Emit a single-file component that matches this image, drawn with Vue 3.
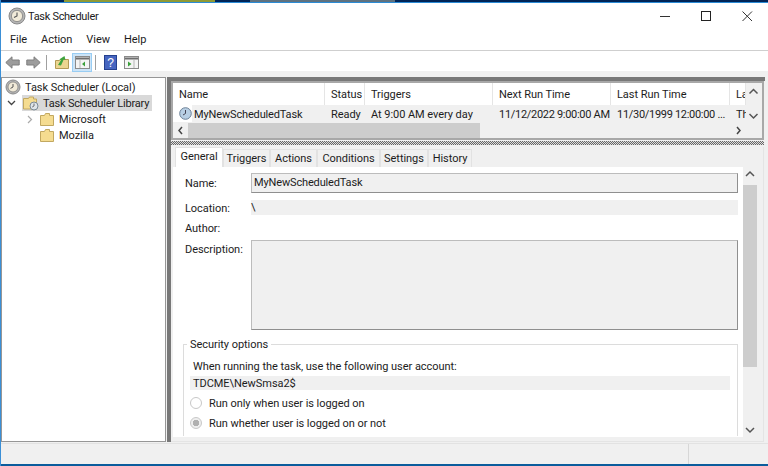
<script setup>
const columns = [
  { label: 'Name', width: 152 },
  { label: 'Status', width: 40 },
  { label: 'Triggers', width: 128 },
  { label: 'Next Run Time', width: 118 },
  { label: 'Last Run Time', width: 119 },
  { label: 'La', width: 16 },
]
const tabs = [
  { label: 'General', width: 48 },
  { label: 'Triggers', width: 47 },
  { label: 'Actions', width: 47 },
  { label: 'Conditions', width: 63 },
  { label: 'Settings', width: 48 },
  { label: 'History', width: 44 },
]
</script>

<template>
  <div class="window">
    <div class="topstrip"></div>
    <div class="titlebar">
      <svg class="clock" width="18" height="18" viewBox="0 0 18 18">
        <circle cx="9" cy="9" r="8" fill="#b5b5b5" stroke="#8a8a8a" />
        <circle cx="9" cy="9" r="5.6" fill="#f1ead8" stroke="#777" stroke-width=".7" />
        <path d="M9 5.500V9l-3 1.600" fill="none" stroke="#555" stroke-width="1.100" />
      </svg>
      <span class="title">Task Scheduler</span>
      <div class="controls">
        <svg width="93" height="14" viewBox="0 0 93 14">
          <path d="M0 7.500H10" stroke="#333" fill="none" />
          <rect x="41.500" y="2.500" width="9" height="9" stroke="#222" fill="none" stroke-width="1" />
          <path d="M82.500 2.500l9.500 9.500M92 2.500L82.500 12" stroke="#333" fill="none" />
        </svg>
      </div>
    </div>
    <div class="menubar">
      <span>File</span><span>Action</span><span>View</span><span>Help</span>
    </div>
    <div class="toolbar">
      <svg class="tool" width="15" height="13" viewBox="0 0 15 13"><path d="M7 .8L.8 6.500 7 12.200V9h7.200V4H7z" fill="#9c9c9c" stroke="#7e7e7e" /></svg>
      <svg class="tool gap1" width="15" height="13" viewBox="0 0 15 13"><path d="M8 .8l6.200 5.700L8 12.200V9H.8V4H8z" fill="#9c9c9c" stroke="#7e7e7e" /></svg>
      <i class="sep"></i>
      <svg class="tool" width="14" height="15" viewBox="0 0 14 15"><path d="M.5 5.500h4l1-1h8v9H.5z" fill="#ecd590" stroke="#b39a55" /><path d="M3 10l3-5-1.800-.5L9.500 1l1 4-1.800-.6L6 10.500z" fill="#3ea33e" /></svg>
      <span class="tool-active">
        <svg width="15" height="13" viewBox="0 0 15 13"><rect x=".5" y=".5" width="14" height="12" fill="#f4f4f4" stroke="#8a8a8a" /><path d="M1 2.500h13" stroke="#6f6f6f" stroke-width="2" /><path d="M7 8l3-2.500v5z" fill="#3a9f3a" /><path d="M5 4v8" stroke="#b5b5b5" /></svg>
      </span>
      <i class="sep sep2"></i>
      <svg class="tool" width="13" height="15" viewBox="0 0 13 15"><rect width="13" height="15" fill="#24408f" /><rect x="1" y="1" width="11" height="13" fill="#4665c0" /><text x="6.500" y="12" text-anchor="middle" font-size="12" fill="#fff" font-family="Liberation Sans">?</text></svg>
      <svg class="tool gap2" width="15" height="13" viewBox="0 0 15 13"><rect x=".5" y=".5" width="14" height="12" fill="#f4f4f4" stroke="#8a8a8a" /><path d="M1 2.500h13" stroke="#6f6f6f" stroke-width="2" /><path d="M4 5.500l3.500 2.500L4 10.500z" fill="#3a9f3a" /><path d="M10 4v8" stroke="#b5b5b5" /></svg>
    </div>

    <div class="workspace">
      <div class="tree">
        <div class="node root">
          <svg width="16" height="16" viewBox="0 0 16 16"><circle cx="8" cy="8" r="7" fill="#b5b5b5" stroke="#8a8a8a" /><circle cx="8" cy="8" r="5" fill="#f1ead8" stroke="#777" stroke-width=".7" /><path d="M8 5v3l-2.500 1.400" fill="none" stroke="#555" /></svg>
          <span class="label">Task Scheduler (Local)</span>
        </div>
        <div class="node lib">
          <svg class="chev" width="9" height="6" viewBox="0 0 9 6"><path d="M1 1l3.500 3.500L8 1" fill="none" stroke="#444" stroke-width="1.300" /></svg>
          <span class="sel">
            <svg width="16" height="16" viewBox="0 0 16 16"><path d="M.5 3.500h5l1-1.500h4v2h3v10H.5z" fill="#f5dc90" stroke="#c2a860" /><circle cx="11" cy="11" r="4" fill="#dfe5ea" stroke="#7b8a96" /><path d="M11 8.500V11l-1.800 1" fill="none" stroke="#555" stroke-width=".8" /></svg>
            <span class="label">Task Scheduler Library</span>
          </span>
        </div>
        <div class="node sub">
          <svg class="chev2" width="6" height="9" viewBox="0 0 6 9"><path d="M1 1l3.500 3.500L1 8" fill="none" stroke="#aaa" stroke-width="1.200" /></svg>
          <svg class="folder" width="14" height="13" viewBox="0 0 14 13"><path d="M.5 2.500h4l1-2h4v2h4v10H.5z" fill="#f5dc90" stroke="#c2a860" /></svg>
          <span class="label">Microsoft</span>
        </div>
        <div class="node sub nochev">
          <svg class="folder" width="14" height="13" viewBox="0 0 14 13"><path d="M.5 2.500h4l1-2h4v2h4v10H.5z" fill="#f5dc90" stroke="#c2a860" /></svg>
          <span class="label">Mozilla</span>
        </div>
      </div>

      <div class="right">
        <div class="listpane">
          <div class="listgrid">
            <div class="listmain">
              <div class="thead">
                <span v-for="c in columns" :key="c.label" class="th" :style="{ width: c.width + 'px' }">{{ c.label }}</span>
              </div>
              <div class="trow">
                <span class="first" :style="{ width: columns[0].width + 'px' }">
                  <svg width="13" height="13" viewBox="0 0 13 13"><circle cx="6.500" cy="6.500" r="5.800" fill="#b8cfe4" stroke="#6a7f96" /><path d="M6.500 3v3.500L4 8" fill="none" stroke="#445" /></svg>
                  <span class="rowname">MyNewScheduledTask</span>
                </span>
                <span class="td" :style="{ width: columns[1].width + 'px' }">Ready</span>
                <span class="td" :style="{ width: columns[2].width + 'px' }">At 9:00 AM every day</span>
                <span class="td date" :style="{ width: columns[3].width + 'px' }">11/12/2022 9:00:00 AM</span>
                <span class="td date" :style="{ width: columns[4].width + 'px' }">11/30/1999 12:00:00 ...</span>
                <span class="td" :style="{ width: columns[5].width + 'px' }">Th</span>
              </div>
              <div class="hscroll">
                <svg width="15" height="15" viewBox="0 0 15 15"><path d="M9 4L6 7.500 9 11" fill="none" stroke="#444" stroke-width="1.500" /></svg>
                <div class="hthumb"></div>
                <svg class="hright" width="15" height="15" viewBox="0 0 15 15"><path d="M6 4l3 3.500L6 11" fill="none" stroke="#444" stroke-width="1.500" /></svg>
              </div>
            </div>
            <div class="vscroll-list">
              <svg width="15" height="15" viewBox="0 0 15 15"><path d="M3.500 9.500l4-4 4 4" fill="none" stroke="#555" stroke-width="1.500" /></svg>
              <svg width="15" height="15" viewBox="0 0 15 15"><path d="M3.500 6l4 4 4-4" fill="none" stroke="#555" stroke-width="1.500" /></svg>
            </div>
          </div>
        </div>
        <div class="splitter"></div>
        <div class="detail">
          <div class="tabs">
            <span v-for="(t, i) in tabs" :key="t.label" class="tab" :class="{ active: i === 0 }" :style="{ width: t.width + 'px' }">{{ t.label }}</span>
          </div>
          <div class="detailbody">
            <div class="form">
              <div class="field namefield">
                <label>Name:</label>
                <div class="input">MyNewScheduledTask</div>
              </div>
              <div class="field locfield">
                <label>Location:</label>
                <div class="ro">\</div>
              </div>
              <div class="field authfield">
                <label>Author:</label>
              </div>
              <div class="field descfield">
                <label>Description:</label>
                <div class="textarea"></div>
              </div>
              <div class="group">
                <span class="legend">Security options</span>
                <div class="grouptext">When running the task, use the following user account:</div>
                <div class="account">TDCME\NewSmsa2$</div>
                <div class="radio"><i class="dot"></i><span class="label">Run only when user is logged on</span></div>
                <div class="radio second"><i class="dot checked"></i><span class="label">Run whether user is logged on or not</span></div>
              </div>
            </div>
            <div class="vscroll">
              <svg width="14" height="15" viewBox="0 0 14 15"><path d="M3 9l4-4 4 4" fill="none" stroke="#555" stroke-width="1.500" /></svg>
              <div class="vthumb"></div>
              <svg class="vdown" width="14" height="15" viewBox="0 0 14 15"><path d="M3 6l4 4 4-4" fill="none" stroke="#555" stroke-width="1.500" /></svg>
            </div>
          </div>
        </div>
      </div>
    </div>

    <div class="status"><i></i></div>
    <div class="bottomstrip"></div>
  </div>
</template>

<style>
html, body { margin: 0; background: #fff; }
</style>

<style scoped>
.window {
  width: 768px; height: 466px; display: flex; flex-direction: column; overflow: hidden;
  background: #f0f0f0; color: #1c1c1c; font: 11px/16px Roboto, "Noto Sans", sans-serif; letter-spacing: -.05px;
  box-sizing: border-box; border-left: 1px solid #3b8fd6;
}
.label { margin-top: 2px; }
.topstrip {
  height: 3px; margin-left: -1px; flex: none;
  border-bottom: 1px solid #2a8bd6; box-sizing: border-box;
  background: linear-gradient(90deg, #012456 0 64px, #8f9a35 64px 215px, #012456 215px 250px, #5f7280 250px 395px, #012456 395px);
}
.titlebar { height: 27px; box-sizing: border-box; padding: 0 0 0 7px; background: #fff; display: flex; align-items: center; flex: none; }
.title { letter-spacing: -.3px; }
.clock { margin: -2px 2px 0 0; flex: none; }
.controls { margin: -2px 15px 0 auto; width: 93px; height: 14px; }
.controls svg { display: block; }
.menubar { height: 21px; box-sizing: border-box; background: #fff; display: flex; align-items: center; padding: 0 0 0 9px; gap: 14px; border-bottom: 1px solid #cfcfcf; flex: none; }
.toolbar { height: 20px; box-sizing: border-box; padding: 2px 0 0 4px; background: #fff; display: flex; align-items: center; flex: none; }
.gap1 { margin-left: 6px; }
.gap2 { margin-left: 7px; }
.tool { flex: none; }
.sep { width: 1px; height: 15px; background: #a0a0a0; margin: 0 8px 0 5px; flex: none; }
.sep2 { margin: 0 8px 0 3px; }
.tool-active { width: 20px; height: 19px; margin-left: 3px; background: #cce4f7; border: 1px solid #99cdf3; box-sizing: border-box; display: flex; align-items: center; justify-content: center; flex: none; }
.workspace { height: 372px; display: flex; padding-top: 6px; box-sizing: border-box; gap: 1px; flex: none; }
.tree { width: 165px; height: 365px; background: #fff; border: 1px solid #969696; box-sizing: border-box; flex: none; padding-top: 1px; }
.node { display: flex; align-items: center; height: 16px; white-space: nowrap; }
.node svg { flex: none; }
.root { padding-left: 3px; gap: 4px; }
.lib { padding-left: 5px; }
.chev { margin-right: 6px; }
.sel { display: flex; align-items: center; gap: 4px; width: 130px; height: 16px; background: #d9d9d9; padding-left: 1px; box-sizing: border-box; flex: none; letter-spacing: -.2px; }
.sub { padding-left: 25px; }
.folder { margin: 0 5px 0 7px; }
.nochev { padding-left: 31px; }
.right { width: 598px; height: 365px; box-sizing: border-box; border-top: 4px solid #787878; border-left: 4px solid #787878; display: flex; flex-direction: column; flex: none; }
.listpane { height: 59px; margin-right: 1px; border: 2px solid #a8a8a8; background: #f0f0f0; box-sizing: border-box; flex: none; }
.listgrid { display: flex; height: 100%; }
.listmain { width: 573px; display: flex; flex-direction: column; flex: none; background: #fff; }
.thead { display: flex; height: 22px; flex: none; }
.th { box-sizing: border-box; padding: 4px 0 0 6px; border-right: 1px solid #e5e5e5; overflow: hidden; white-space: nowrap; flex: none; }
.trow { display: flex; height: 17px; flex: none; }
.td { box-sizing: border-box; padding: 2px 0 0 6px; background: #f0f0f0; overflow: hidden; white-space: nowrap; flex: none; }
.date { letter-spacing: -.3px; }
.first { display: flex; box-sizing: border-box; padding-left: 6px; flex: none; background: #fff; }
.first svg { margin: 2px 0 0 0; flex: none; }
.rowname { flex: 1; background: #f0f0f0; padding: 2px 0 0 2px; letter-spacing: -.15px; }
.hscroll { flex: 1; background: #f0f0f0; display: flex; align-items: center; }
.hthumb { width: 292px; height: 15px; background: #cdcdcd; }
.hright { margin-left: auto; }
.vscroll-list { flex: 1; background: #f0f0f0; display: flex; flex-direction: column; padding-top: 1px; }
.vscroll-list svg + svg { margin-top: 9px; }
.splitter { height: 4px; margin: 1px 1px 2px 0; background: repeating-conic-gradient(#666 0 25%, #ddd 0 50%) 0 0 / 2px 2px; flex: none; }
.detail { flex: 1; min-height: 0; padding: 0 6px 4px 2px; margin-right: 1px; border-bottom: 1px solid #e4e4e4; border-right: 1px solid #e4e4e4; display: flex; flex-direction: column; }
.tabs { display: flex; height: 20px; padding-left: 2px; flex: none; align-items: flex-end; }
.tab { box-sizing: border-box; height: 18px; background: #f0f0f0; border: 1px solid #e2e2e2; border-bottom: 0; text-align: center; line-height: 17px; flex: none; }
.tab.active { height: 20px; background: #fff; line-height: 18px; }
.detailbody { flex: 1; min-height: 0; background: #fff; display: flex; }
.form { flex: 1; min-width: 0; padding: 6px 0 0 12px; overflow: hidden; }
.field { display: flex; align-items: flex-start; }
.field label { width: 66px; flex: none; }
.namefield { height: 27px; }
.namefield label { padding-top: 3px; }
.input { width: 487px; height: 20px; box-sizing: border-box; background: #f0f0f0; border: 1px solid #bcbcbc; border-right-color: #8f8f8f; border-bottom-color: #8f8f8f; padding: 1px 0 0 2px; letter-spacing: -.15px; }
.locfield { height: 20px; }
.locfield label { padding-top: 1px; }
.ro { width: 487px; height: 15px; background: #f0f0f0; }
.authfield { height: 20px; padding-top: 1px; box-sizing: border-box; }
.descfield { height: 104px; }
.descfield label { padding-top: 2px; }
.textarea { width: 487px; height: 90px; box-sizing: border-box; background: #f0f0f0; border: 1px solid #bcbcbc; border-right-color: #8f8f8f; border-bottom-color: #8f8f8f; }
.group { position: relative; width: 555px; height: 92px; box-sizing: border-box; border: 1px solid #dcdcdc; border-bottom: 0; padding: 14px 0 0 6px; margin-left: -2px; }
.legend { position: absolute; left: 3px; top: -8px; background: #fff; padding: 0 3px; }
.grouptext { padding-left: 3px; height: 17px; }
.account { width: 540px; height: 14px; background: #f0f0f0; padding-left: 3px; box-sizing: border-box; }
.radio { display: flex; align-items: center; height: 20px; margin-top: 3px; gap: 7px; }
.second { margin-top: 0; }
.dot { width: 12px; height: 12px; box-sizing: border-box; border: 1px solid #c8c8c8; border-radius: 50%; background: #fff; flex: none; }
.dot.checked { background: radial-gradient(circle, #b0b0b0 0 3px, #eee 3.500px); }
.vscroll { width: 14px; background: #f0f0f0; display: flex; flex-direction: column; flex: none; }
.vthumb { height: 182px; margin-top: 3px; background: #cdcdcd; flex: none; }
.vdown { margin-top: auto; }
.status { height: 21px; flex: none; border-top: 1px solid #e2e2e2; display: flex; justify-content: flex-end; padding-right: 2px; box-sizing: border-box; }
.status i { width: 77px; border-left: 1px solid #d7d7d7; }
.bottomstrip { height: 2px; background: #0b5c9c; flex: none; margin-left: -1px; }
</style>
